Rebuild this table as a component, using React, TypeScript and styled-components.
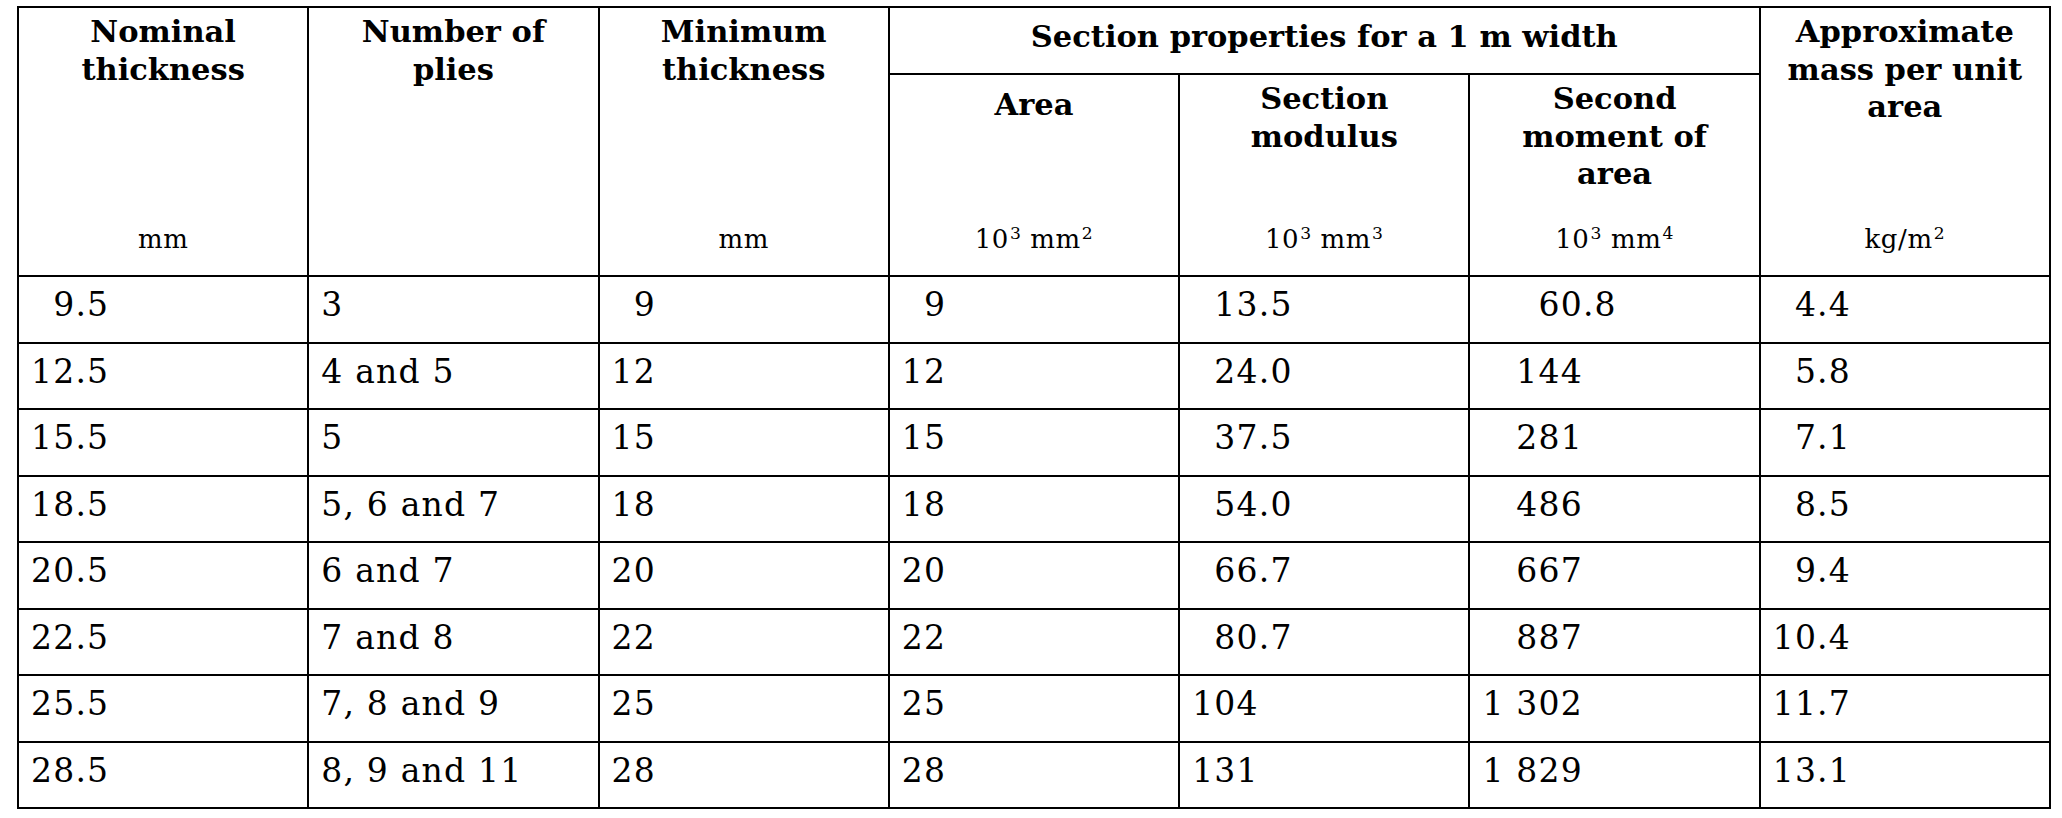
import styled, { createGlobalStyle } from "styled-components";

const Global = createGlobalStyle`
  body {
    margin: 0;
    background: #fff;
    color: #000;
    font-family: "DejaVu Serif", "Liberation Serif", serif;
  }
`;

const Sheet = styled.div`
  padding: 6px 0 0 17px;
`;

const Grid = styled.div`
  display: grid;
  width: 2032px;
  grid-template-columns: repeat(7, 1fr);
  grid-template-rows: 67px 202px repeat(8, 66.5px);
  border-left: 2px solid #000;
  border-top: 2px solid #000;
`;

const HeadCell = styled.div<{ $span?: number; $rows?: number; $top?: number }>`
  grid-column: span ${(p) => p.$span ?? 1};
  grid-row: span ${(p) => p.$rows ?? 1};
  box-sizing: border-box;
  border-right: 2px solid #000;
  border-bottom: 2px solid #000;
  display: flex;
  flex-direction: column;
  justify-content: space-between;
  align-items: center;
  padding: ${(p) => p.$top ?? 5}px 8px 20px;
  text-align: center;
`;

const Title = styled.div`
  font-weight: 700;
  font-size: 30.5px;
  line-height: 37.5px;
`;

const Unit = styled.div`
  font-size: 26px;
  line-height: 32px;
  letter-spacing: 0.6px;
`;

const Sup = styled.sup`
  font-size: 0.66em;
  vertical-align: 0.55em;
  line-height: 0;
  margin-left: 1px;
`;

const Cell = styled.div`
  box-sizing: border-box;
  border-right: 2px solid #000;
  border-bottom: 2px solid #000;
  padding: 8px 12px 0;
  font-size: 33px;
  line-height: 40px;
  letter-spacing: 1.2px;
  white-space: pre;
`;

const F = "\u2007";
const P = "\u2008";

const rows: string[][] = [
  [F + "9.5", "3", F + "9", F + "9", F + "13.5", F + P + F + "60.8", F + "4.4"],
  ["12.5", "4 and 5", "12", "12", F + "24.0", F + P + "144", F + "5.8"],
  ["15.5", "5", "15", "15", F + "37.5", F + P + "281", F + "7.1"],
  ["18.5", "5, 6 and 7", "18", "18", F + "54.0", F + P + "486", F + "8.5"],
  ["20.5", "6 and 7", "20", "20", F + "66.7", F + P + "667", F + "9.4"],
  ["22.5", "7 and 8", "22", "22", F + "80.7", F + P + "887", "10.4"],
  ["25.5", "7, 8 and 9", "25", "25", "104", "1 302", "11.7"],
  ["28.5", "8, 9 and 11", "28", "28", "131", "1 829", "13.1"],
];

export default function App() {
  return (
    <>
      <Global />
      <Sheet>
        <Grid>
          <HeadCell $rows={2}>
            <Title>
              Nominal
              <br />
              thickness
            </Title>
            <Unit>mm</Unit>
          </HeadCell>
          <HeadCell $rows={2}>
            <Title>
              Number of
              <br />
              plies
            </Title>
          </HeadCell>
          <HeadCell $rows={2}>
            <Title>
              Minimum
              <br />
              thickness
            </Title>
            <Unit>mm</Unit>
          </HeadCell>
          <HeadCell $span={3} $top={10}>
            <Title>Section properties for a 1 m width</Title>
          </HeadCell>
          <HeadCell $rows={2}>
            <Title>
              Approximate
              <br />
              mass per unit
              <br />
              area
            </Title>
            <Unit>
              kg/m<Sup>2</Sup>
            </Unit>
          </HeadCell>
          <HeadCell $top={11}>
            <Title>Area</Title>
            <Unit>
              10<Sup>3</Sup> mm<Sup>2</Sup>
            </Unit>
          </HeadCell>
          <HeadCell>
            <Title>
              Section
              <br />
              modulus
            </Title>
            <Unit>
              10<Sup>3</Sup> mm<Sup>3</Sup>
            </Unit>
          </HeadCell>
          <HeadCell>
            <Title>
              Second
              <br />
              moment of
              <br />
              area
            </Title>
            <Unit>
              10<Sup>3</Sup> mm<Sup>4</Sup>
            </Unit>
          </HeadCell>

          {rows.map((r, i) => r.map((v, j) => <Cell key={`${i}-${j}`}>{v}</Cell>))}
        </Grid>
      </Sheet>
    </>
  );
}
